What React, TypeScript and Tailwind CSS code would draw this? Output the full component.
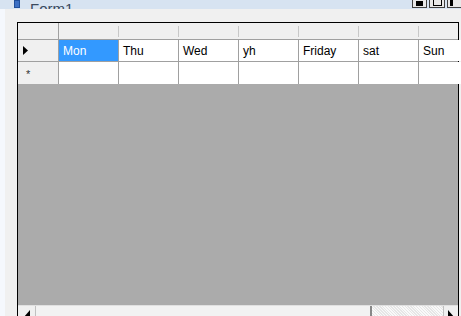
import React from 'react';

const days = ['Mon', 'Thu', 'Wed', 'yh', 'Friday', 'sat', 'Sun'];

const App: React.FC = () => {
  return (
    <div className="w-[461px] h-[316px] overflow-hidden flex flex-col bg-[#f0f0f0] text-[12px] text-black" style={{ fontFamily: '"Liberation Sans", Arial, sans-serif' }}>
      {/* title bar, mostly scrolled off the top */}
      <div className="h-[9px] shrink-0 bg-[#d7e3f1] flex items-end relative overflow-hidden">
        <div className="ml-[14px] mb-[1px] w-[6px] h-[8px] bg-[#3b6fc4] border border-[#1f4f9c]" />
        <span className="ml-[10px] mb-[-7px] text-[15px] text-[#3a4a5e] leading-none">Form1</span>
        <div className="absolute right-0 top-0 flex gap-[2px]">
          <div className="w-[15px] h-[8px] border border-[#404040] border-t-0 bg-[#e8e8e8] flex items-end justify-center pb-[1px]">
            <div className="w-[7px] h-[5px] bg-black" />
          </div>
          <div className="w-[16px] h-[8px] border border-[#404040] border-t-0 bg-[#e8e8e8] flex items-end justify-center pb-[1px]">
            <div className="w-[9px] h-[6px] border border-black border-t-0" />
          </div>
          <div className="w-[14px] h-[8px] border border-[#404040] border-t-0 border-r-0 bg-[#e8e8e8] flex items-end pl-[2px] pb-[1px]">
            <div className="w-[3px] h-[6px] bg-black" />
          </div>
        </div>
      </div>

      <div className="flex flex-1 min-h-0">
        <div className="w-[5px] shrink-0 bg-[#f5f8fd]" />
        <div className="flex-1 pl-[12px] pt-[13px] flex">
          {/* DataGridView */}
          <div className="w-[442px] h-[320px] shrink-0 border border-black flex flex-col bg-[#ababab]">
            {/* header row */}
            <div className="flex h-[17px] bg-[#f0f0f0] border-b border-[#a0a0a0] shrink-0">
              <div className="w-[41px] shrink-0 border-r border-[#a0a0a0]" />
              {days.map((d) => (
                <div key={d} className="w-[60px] shrink-0 flex items-center justify-end">
                  <div className="w-px h-[11px] bg-[#c8c8c8]" />
                </div>
              ))}
            </div>
            {/* row 1 */}
            <div className="flex h-[22px] shrink-0 border-b border-[#a0a0a0] bg-white">
              <div className="w-[41px] shrink-0 bg-[#f0f0f0] border-r border-[#a0a0a0] flex items-center pl-[5px]">
                <svg width="6" height="9" viewBox="0 0 6 9"><path d="M0 0 L5 4.5 L0 9 Z" fill="#000" /></svg>
              </div>
              {days.map((d, i) => (
                <div
                  key={d}
                  className={`w-[60px] shrink-0 flex items-center pl-[4px] border-r border-[#a0a0a0] ${i === 0 ? 'bg-[#3399ff] text-white' : 'bg-white'}`}
                >
                  {d}
                </div>
              ))}
            </div>
            {/* new row */}
            <div className="flex h-[22px] shrink-0 bg-white">
              <div className="w-[41px] shrink-0 bg-[#f0f0f0] border-r border-[#a0a0a0] flex items-center pl-[8px] text-[11px] leading-none text-[#333]">
                <span className="mt-[3px]">*</span>
              </div>
              {days.map((d) => (
                <div key={d} className="w-[60px] shrink-0 border-r border-[#a0a0a0] bg-white" />
              ))}
            </div>
            <div className="h-[221px] shrink-0" />
            {/* horizontal scrollbar */}
            <div className="flex h-[17px] shrink-0 bg-[#f0f0f0] border-t border-[#e0e0e0]">
              <div className="w-[17px] shrink-0 flex items-start justify-center pt-[4px]">
                <svg width="6" height="7" viewBox="0 0 6 7"><path d="M0 7 L6 0 L6 7 Z" fill="#000" /></svg>
              </div>
              <div className="w-[337px] shrink-0 bg-[#f2f2f2] border-l border-[#c0c0c0] border-r-2 border-r-[#888]" />
              <div className="flex-1 bg-[#f9f9f9]" style={{ backgroundImage: 'repeating-linear-gradient(45deg,#e6e6e6 0 1px,transparent 1px 2px)' }} />
              <div className="w-[15px] shrink-0 flex items-start justify-center pt-[4px] border-l border-[#c0c0c0]">
                <svg width="6" height="7" viewBox="0 0 6 7"><path d="M0 0 L6 7 L0 7 Z" fill="#000" /></svg>
              </div>
            </div>
          </div>
        </div>
      </div>
    </div>
  );
};

export default App;
